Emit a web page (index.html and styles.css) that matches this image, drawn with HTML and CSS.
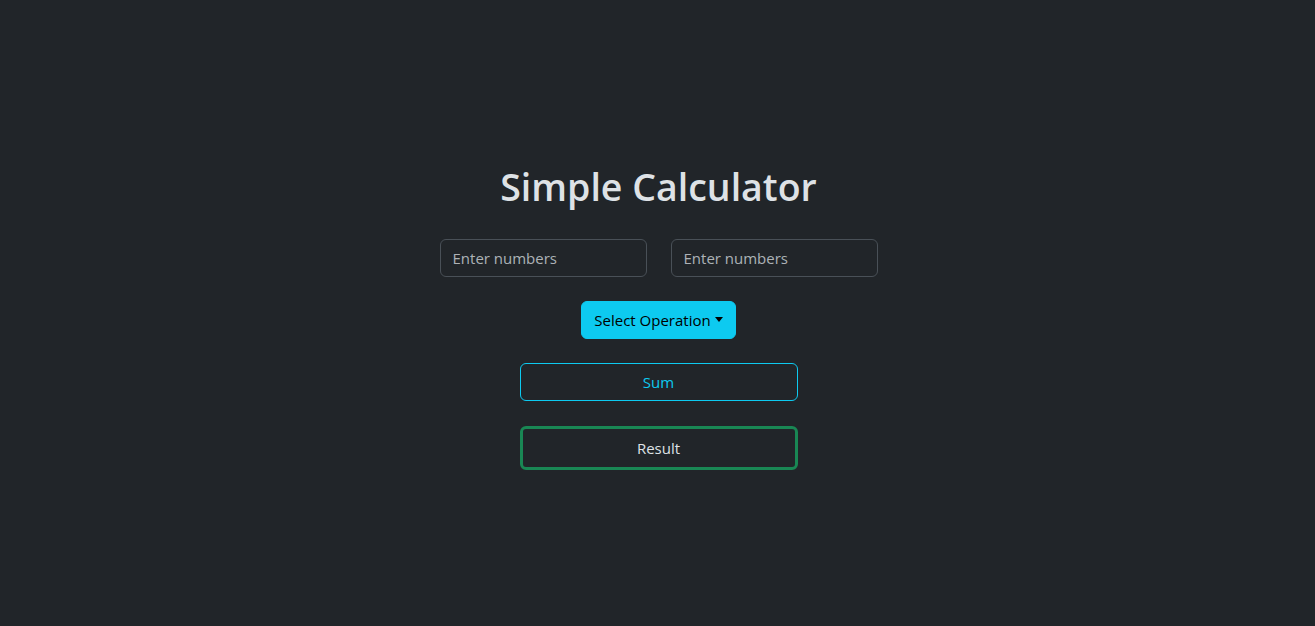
FILE: index.html
```html
<!DOCTYPE html>
<html lang="en" data-bs-theme="dark">
<head>
    <meta charset="UTF-8">
    <meta name="viewport" content="width=device-width, initial-scale=1.0">
    <title>Simple Calculator</title>
    <link rel="stylesheet" href="styles.css">
</head>
<body>
    <div class="container">
        <h1>Simple Calculator</h1>
        <div class="inputs">
            <input type="number" id="num1" placeholder="Enter numbers">
            <input type="number" id="num2" placeholder="Enter numbers">
        </div>
        <button class="btn-dropdown">Select Operation<span class="caret"></span></button>
        <button class="btn-sum">Sum</button>
        <div class="result">Result</div>
    </div>
</body>
</html>
```

FILE: styles.css
```css
body {
    font-family: "Open Sans", "Noto Sans", sans-serif;
    background-color: #212529;
    color: #dee2e6;
    margin: 0;
    padding: 0;
    display: flex;
    justify-content: center;
    align-items: center;
    min-height: 100vh;
}
.container {
    display: flex;
    flex-direction: column;
    align-items: center;
    gap: 24px;
    margin-left: 2px;
    padding-top: 8px;
}
h1 {
    font-size: 37.5px;
    font-weight: 600;
    line-height: 1.2;
    margin: 0 0 6px;
    color: #dee2e6;
}
.inputs {
    display: flex;
    gap: 24px;
}
.inputs input {
    width: 207px;
    height: 38px;
    box-sizing: border-box;
    padding: 6px 12px;
    font-family: inherit;
    font-size: 15px;
    color: #dee2e6;
    background-color: #212529;
    border: 1px solid #495057;
    border-radius: 6px;
    outline: none;
}
.inputs input::placeholder {
    color: rgba(222, 226, 230, 0.75);
}
button {
    font-family: inherit;
    font-size: 15px;
    height: 38px;
    box-sizing: border-box;
    border-radius: 6px;
    cursor: pointer;
}
.btn-dropdown {
    background-color: #0dcaf0;
    color: #000;
    border: 1px solid #0dcaf0;
    padding: 0 12px;
}
.caret {
    display: inline-block;
    margin-left: 4px;
    vertical-align: 4px;
    border-top: 5px solid #000;
    border-left: 4px solid transparent;
    border-right: 4px solid transparent;
}
.btn-sum {
    width: 278px;
    background: transparent;
    color: #0dcaf0;
    border: 1px solid #0dcaf0;
}
.result {
    width: 278px;
    height: 44px;
    box-sizing: border-box;
    border: 3px solid #198754;
    border-radius: 6px;
    display: flex;
    align-items: center;
    justify-content: center;
    font-size: 15px;
    margin-top: 1px;
}
```
